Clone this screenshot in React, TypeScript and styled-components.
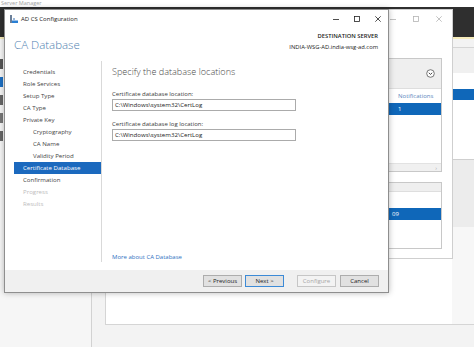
import { createGlobalStyle, styled } from "styled-components";

const GlobalStyle = createGlobalStyle`
  html, body {
    margin: 0;
    padding: 0;
  }
  body {
    font-family: "Segoe UI", "Open Sans", "Noto Sans", sans-serif;
    background: #f3f3f3;
  }
  * {
    box-sizing: border-box;
  }
`;

const Desktop = styled.div`
  position: relative;
  width: 474px;
  height: 347px;
  overflow: hidden;
  background: #f3f3f3;
`;

/* ---------- Server Manager (behind everything) ---------- */
const ServerManager = styled.div`
  position: absolute;
  inset: 0;
  display: flex;
  flex-direction: column;
`;
const SmTitle = styled.div`
  height: 7px;
  background: #fff;
  font-size: 5.5px;
  line-height: 7px;
  color: #a6a6a6;
  white-space: nowrap;
  padding-left: 1px;
`;
const SmHeader = styled.div`
  height: 30px;
  background: #2f2f2f;
`;
const SmStripe = styled.div`
  height: 2px;
  background: #f6ecbb;
`;
const SmBody = styled.div`
  flex: 1;
  display: flex;
`;
const SmNav = styled.div`
  width: 92px;
  background: #f6f6f6;
  border-right: 1px solid #d2d2d2;
  display: flex;
  flex-direction: column;
  gap: 8px;
  padding-top: 20px;
`;
const SmNavIcon = styled.div<{ $c: string }>`
  width: 3px;
  height: 10px;
  background: ${(p) => p.$c};
`;
const SmMain = styled.div`
  flex: 1;
  display: flex;
  padding: 8px 0 22px 13px;
`;
const Tile = styled.div`
  flex: 1;
  display: flex;
  justify-content: flex-end;
  background: #fff;
  border: 1px solid #d5d5d5;
  border-right: none;
`;
const RightColumn = styled.div`
  width: 22px;
  display: flex;
  flex-direction: column;
`;
const Band = styled.div<{ $h: number; $bg: string; $line?: boolean }>`
  height: ${(p) => p.$h}px;
  background: ${(p) => p.$bg};
  border-top: ${(p) => (p.$line ? "1px solid #cfcfcf" : "none")};
  flex-shrink: 0;
`;
const BandFill = styled.div`
  flex: 1;
  background: #f7f7f7;
`;

/* ---------- second window ---------- */
const BackWindow = styled.div`
  position: absolute;
  left: 160px;
  top: 9px;
  width: 293px;
  height: 250px;
  background: #fff;
  border: 1px solid #cfcfcf;
  display: flex;
  flex-direction: column;
`;
const BackTitle = styled.div`
  height: 18px;
  display: flex;
  align-items: center;
  justify-content: flex-end;
  gap: 17px;
  padding-right: 10px;
  color: #b4b4b4;
`;
const BackContent = styled.div`
  flex: 1;
  display: flex;
  flex-direction: column;
  align-items: flex-end;
  padding: 30px 10px 0 0;
`;
const Panel = styled.div<{ $h: number; $mt?: number }>`
  width: 110px;
  height: ${(p) => p.$h}px;
  margin-top: ${(p) => p.$mt ?? 0}px;
  border: 1px solid #c8c8c8;
  display: flex;
  flex-direction: column;
  font-size: 6px;
`;
const PanelHead = styled.div<{ $h: number }>`
  height: ${(p) => p.$h}px;
  background: #efefef;
  border-bottom: 1px solid #dedede;
  display: flex;
  align-items: center;
  justify-content: flex-end;
  padding-right: 6px;
  flex-shrink: 0;
`;
const ColHead = styled.div`
  height: 14px;
  line-height: 14px;
  padding-left: 65px;
  color: #5a86bd;
`;
const SelRow = styled.div<{ $pl: number; $mt?: number }>`
  height: 12px;
  line-height: 12px;
  margin-top: ${(p) => p.$mt ?? 0}px;
  padding-left: ${(p) => p.$pl}px;
  background: #0f67b9;
  color: #fff;
`;
const Spacer = styled.div`
  flex: 1;
`;
const ScrollStrip = styled.div`
  height: 8px;
  background: #f0f0f0;
  border-top: 1px solid #e2e2e2;
  display: flex;
  align-items: center;
  justify-content: flex-end;
  padding-right: 4px;
  color: #aaa;
  font-size: 6px;
`;

/* ---------- AD CS dialog ---------- */
const Dialog = styled.div`
  position: absolute;
  left: 4px;
  top: 9px;
  width: 385px;
  height: 284px;
  background: #fff;
  border: 1px solid #8e8e8e;
  box-shadow: 0 0 6px rgba(0, 0, 0, 0.28);
  display: flex;
  flex-direction: column;
  color: #262626;
`;
const TitleBar = styled.div`
  height: 18px;
  display: flex;
  align-items: center;
  padding: 0 7px 0 5px;
  font-size: 6px;
  color: #1a1a1a;
`;
const TitleText = styled.span`
  margin-left: 3px;
  flex: 1;
`;
const Controls = styled.div`
  display: flex;
  align-items: center;
  gap: 15px;
  color: #222;
`;
const Header = styled.div`
  height: 33px;
  display: flex;
  justify-content: space-between;
  padding: 0 10px 0 9px;
`;
const PageTitle = styled.div`
  align-self: center;
  font-size: 11.5px;
  font-weight: 300;
  color: #4f82b1;
`;
const Dest = styled.div`
  padding-top: 3px;
  text-align: right;
  font-size: 5.8px;
  line-height: 11px;
  color: #222;
`;
const DestLabel = styled.div`
  font-weight: 600;
`;
const Body = styled.div`
  flex: 1;
  display: flex;
  padding-bottom: 8px;
`;
const Nav = styled.div`
  width: 97px;
  border-right: 1px solid #d9d9d9;
  padding: 5px 0 0 9px;
`;
const NavItem = styled.div<{ $indent?: boolean; $active?: boolean; $disabled?: boolean }>`
  height: 12px;
  line-height: 12px;
  font-size: 6.1px;
  padding-left: ${(p) => (p.$indent ? 19 : 9)}px;
  background: ${(p) => (p.$active ? "#1b69be" : "transparent")};
  color: ${(p) => (p.$active ? "#fff" : p.$disabled ? "#bdbdbd" : "#444")};
  white-space: nowrap;
`;
const Content = styled.div`
  flex: 1;
  display: flex;
  flex-direction: column;
  padding: 5px 0 0 10px;
`;
const Heading = styled.div`
  height: 12px;
  line-height: 12px;
  font-size: 9.1px;
  font-weight: 300;
  color: #4a4a4a;
`;
const Label = styled.div<{ $mt: number }>`
  margin-top: ${(p) => p.$mt}px;
  height: 10px;
  line-height: 10px;
  font-size: 6px;
  color: #3a3a3a;
`;
const PathBox = styled.div`
  width: 184px;
  height: 12px;
  line-height: 10px;
  border: 1px solid #ababab;
  padding-left: 2px;
  font-size: 6.1px;
  color: #222;
`;
const MoreLink = styled.a`
  margin-top: auto;
  height: 10px;
  line-height: 10px;
  font-size: 6px;
  color: #2f72bf;
  text-decoration: none;
`;
const Footer = styled.div`
  height: 22px;
  background: #f0f0f0;
  display: flex;
  align-items: center;
  justify-content: flex-end;
  padding-right: 9px;
`;
const Button = styled.div<{ $ml: number; $primary?: boolean; $disabled?: boolean }>`
  width: 39px;
  height: 12px;
  margin-left: ${(p) => p.$ml}px;
  display: flex;
  align-items: center;
  justify-content: center;
  font-size: 6px;
  background: ${(p) => (p.$disabled ? "#f3f3f3" : "#e1e1e1")};
  border: 1px solid ${(p) => (p.$primary ? "#3c8ad6" : p.$disabled ? "#c6c6c6" : "#adadad")};
  color: ${(p) => (p.$disabled ? "#a6a6a6" : "#222")};
`;

function MinIcon() {
  return (
    <svg width="6" height="6" viewBox="0 0 6 6">
      <line x1="0" y1="3.5" x2="6" y2="3.5" stroke="currentColor" strokeWidth="0.8" />
    </svg>
  );
}
function MaxIcon() {
  return (
    <svg width="6" height="6" viewBox="0 0 6 6">
      <rect x="0.5" y="0.5" width="5" height="5" fill="none" stroke="currentColor" strokeWidth="0.8" />
    </svg>
  );
}
function CloseIcon() {
  return (
    <svg width="6" height="6" viewBox="0 0 6 6">
      <path d="M0.3 0.3 L5.7 5.7 M5.7 0.3 L0.3 5.7" stroke="currentColor" strokeWidth="0.8" />
    </svg>
  );
}
function AppIcon() {
  return (
    <svg width="8" height="8" viewBox="0 0 8 8">
      <rect x="0" y="0" width="2" height="8" fill="#6b7f99" />
      <rect x="2" y="5.5" width="6" height="2.5" fill="#2a7fd4" />
      <rect x="3" y="3" width="2" height="2.5" fill="#9bb7d8" />
    </svg>
  );
}
function ChevronCircle() {
  return (
    <svg width="9" height="9" viewBox="0 0 9 9">
      <circle cx="4.5" cy="4.5" r="3.8" fill="#fff" stroke="#555" strokeWidth="0.8" />
      <path d="M2.8 3.8 L4.5 5.4 L6.2 3.8" fill="none" stroke="#333" strokeWidth="0.9" />
    </svg>
  );
}

const steps: { label: string; indent?: boolean; active?: boolean; disabled?: boolean }[] = [
  { label: "Credentials" },
  { label: "Role Services" },
  { label: "Setup Type" },
  { label: "CA Type" },
  { label: "Private Key" },
  { label: "Cryptography", indent: true },
  { label: "CA Name", indent: true },
  { label: "Validity Period", indent: true },
  { label: "Certificate Database", active: true },
  { label: "Confirmation" },
  { label: "Progress", disabled: true },
  { label: "Results", disabled: true },
];

export default function App() {
  return (
    <Desktop>
      <GlobalStyle />
      <ServerManager>
        <SmTitle>Server Manager</SmTitle>
        <SmHeader />
        <SmStripe />
        <SmBody>
          <SmNav>
            <SmNavIcon $c="#555" />
            <SmNavIcon $c="#1d6fc2" />
            <SmNavIcon $c="#666" />
            <SmNavIcon $c="#777" />
            <SmNavIcon $c="#666" />
          </SmNav>
          <SmMain>
            <Tile>
              <RightColumn>
                <Band $h={25} $bg="#f0f0f0" />
                <Band $h={16} $bg="#fff" />
                <Band $h={11} $bg="#0f67b9" />
                <Band $h={59} $bg="#fff" />
                <Band $h={68} $bg="#ececec" $line />
                <BandFill />
              </RightColumn>
            </Tile>
          </SmMain>
        </SmBody>
      </ServerManager>

      <BackWindow>
        <BackTitle>
          <MinIcon />
          <MaxIcon />
          <CloseIcon />
        </BackTitle>
        <BackContent>
          <Panel $h={114}>
            <PanelHead $h={30}>
              <ChevronCircle />
            </PanelHead>
            <ColHead>Notifications</ColHead>
            <SelRow $pl={65}>1</SelRow>
            <Spacer />
            <ScrollStrip>›</ScrollStrip>
          </Panel>
          <Panel $h={67} $mt={10}>
            <PanelHead $h={9} />
            <SelRow $pl={59} $mt={16}>09</SelRow>
          </Panel>
        </BackContent>
      </BackWindow>

      <Dialog>
        <TitleBar>
          <AppIcon />
          <TitleText>AD CS Configuration</TitleText>
          <Controls>
            <MinIcon />
            <MaxIcon />
            <CloseIcon />
          </Controls>
        </TitleBar>
        <Header>
          <PageTitle>CA Database</PageTitle>
          <Dest>
            <DestLabel>DESTINATION SERVER</DestLabel>
            <div>INDIA-WSG-AD.india-wsg-ad.com</div>
          </Dest>
        </Header>
        <Body>
          <Nav>
            {steps.map((s) => (
              <NavItem key={s.label} $indent={s.indent} $active={s.active} $disabled={s.disabled}>
                {s.label}
              </NavItem>
            ))}
          </Nav>
          <Content>
            <Heading>Specify the database locations</Heading>
            <Label $mt={11}>Certificate database location:</Label>
            <PathBox>C:\Windows\system32\CertLog</PathBox>
            <Label $mt={8}>Certificate database log location:</Label>
            <PathBox>C:\Windows\system32\CertLog</PathBox>
            <MoreLink href="#">More about CA Database</MoreLink>
          </Content>
        </Body>
        <Footer>
          <Button $ml={0}>&lt; Previous</Button>
          <Button $ml={3} $primary>
            Next &gt;
          </Button>
          <Button $ml={13} $disabled>
            Configure
          </Button>
          <Button $ml={4}>Cancel</Button>
        </Footer>
      </Dialog>
    </Desktop>
  );
}
